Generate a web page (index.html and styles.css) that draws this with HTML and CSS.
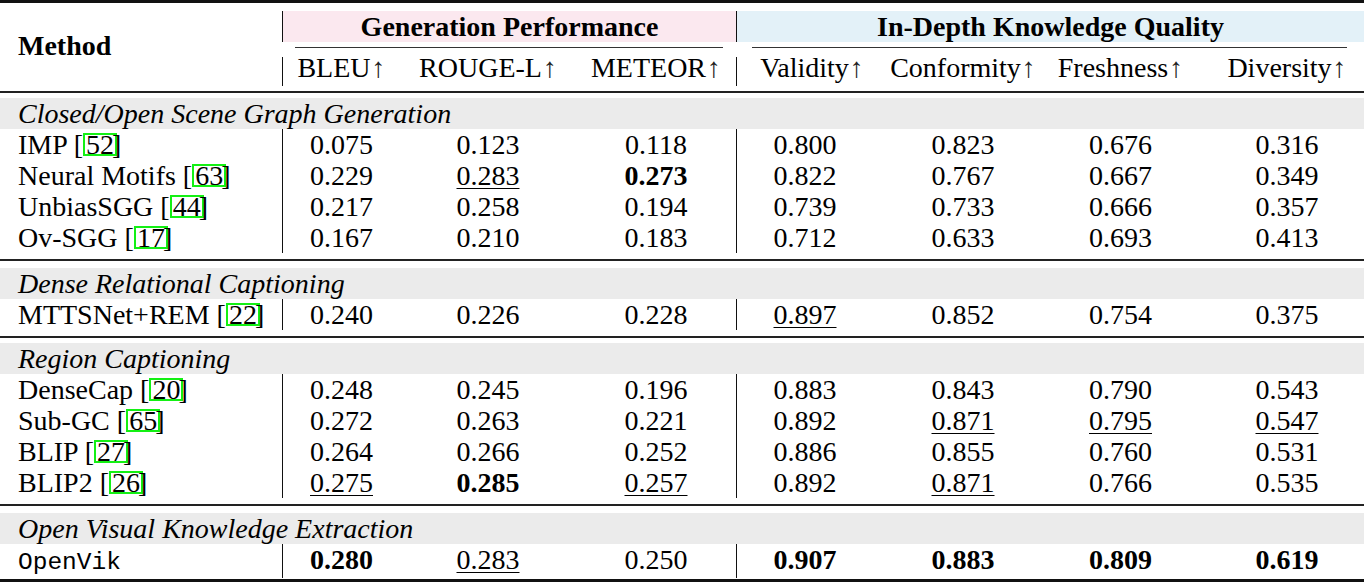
FILE: index.html
```html
<!DOCTYPE html>
<html>
<head>
<meta charset="utf-8">
<link rel="stylesheet" href="styles.css">
</head>
<body>
<div class="tbl">
  <div class="toprule"></div>
  <div class="head">
    <div class="method">Method</div>
    <div class="grp grp-gen">Generation Performance</div>
    <div class="grp grp-kq">In-Depth Knowledge Quality</div>
    <div class="cmid cmid-gen"></div>
    <div class="cmid cmid-kq"></div>
    <div class="sub c1 vl">BLEU<span class="arr">↑</span></div>
    <div class="sub c2">ROUGE-L<span class="arr">↑</span></div>
    <div class="sub c3">METEOR<span class="arr">↑</span></div>
    <div class="sub c4 vl val-h">Validity<span class="arr">↑</span></div>
    <div class="sub c5">Conformity<span class="arr">↑</span></div>
    <div class="sub c6">Freshness<span class="arr">↑</span></div>
    <div class="sub c7 div-c">Diversity<span class="arr">↑</span></div>
  </div>
  <div class="midrule mt5"></div>

  <div class="sec mt5">Closed/Open Scene Graph Generation</div>
  <div class="row">
    <div class="m">IMP [<span class="cite">52</span>]</div>
    <div class="n vl">0.075</div><div class="n">0.123</div><div class="n">0.118</div>
    <div class="n vl val">0.800</div><div class="n">0.823</div><div class="n">0.676</div><div class="n div-c">0.316</div>
  </div>
  <div class="row">
    <div class="m">Neural Motifs [<span class="cite">63</span>]</div>
    <div class="n vl">0.229</div><div class="n"><u>0.283</u></div><div class="n"><b>0.273</b></div>
    <div class="n vl val">0.822</div><div class="n">0.767</div><div class="n">0.667</div><div class="n div-c">0.349</div>
  </div>
  <div class="row">
    <div class="m">UnbiasSGG [<span class="cite">44</span>]</div>
    <div class="n vl">0.217</div><div class="n">0.258</div><div class="n">0.194</div>
    <div class="n vl val">0.739</div><div class="n">0.733</div><div class="n">0.666</div><div class="n div-c">0.357</div>
  </div>
  <div class="row">
    <div class="m">Ov-SGG [<span class="cite">17</span>]</div>
    <div class="n vl">0.167</div><div class="n">0.210</div><div class="n">0.183</div>
    <div class="n vl val">0.712</div><div class="n">0.633</div><div class="n">0.693</div><div class="n div-c">0.413</div>
  </div>
  <div class="midrule mt6"></div>

  <div class="sec mt7">Dense Relational Captioning</div>
  <div class="row">
    <div class="m">MTTSNet+REM [<span class="cite">22</span>]</div>
    <div class="n vl">0.240</div><div class="n">0.226</div><div class="n">0.228</div>
    <div class="n vl val"><u>0.897</u></div><div class="n">0.852</div><div class="n">0.754</div><div class="n div-c">0.375</div>
  </div>
  <div class="midrule mt6"></div>

  <div class="sec mt5">Region Captioning</div>
  <div class="row">
    <div class="m">DenseCap [<span class="cite">20</span>]</div>
    <div class="n vl">0.248</div><div class="n">0.245</div><div class="n">0.196</div>
    <div class="n vl val">0.883</div><div class="n">0.843</div><div class="n">0.790</div><div class="n div-c">0.543</div>
  </div>
  <div class="row">
    <div class="m">Sub-GC [<span class="cite">65</span>]</div>
    <div class="n vl">0.272</div><div class="n">0.263</div><div class="n">0.221</div>
    <div class="n vl val">0.892</div><div class="n"><u>0.871</u></div><div class="n"><u>0.795</u></div><div class="n div-c"><u>0.547</u></div>
  </div>
  <div class="row">
    <div class="m">BLIP [<span class="cite">27</span>]</div>
    <div class="n vl">0.264</div><div class="n">0.266</div><div class="n">0.252</div>
    <div class="n vl val">0.886</div><div class="n">0.855</div><div class="n">0.760</div><div class="n div-c">0.531</div>
  </div>
  <div class="row">
    <div class="m">BLIP2 [<span class="cite">26</span>]</div>
    <div class="n vl"><u>0.275</u></div><div class="n"><b>0.285</b></div><div class="n"><u>0.257</u></div>
    <div class="n vl val">0.892</div><div class="n"><u>0.871</u></div><div class="n">0.766</div><div class="n div-c">0.535</div>
  </div>
  <div class="midrule mt6"></div>

  <div class="sec mt7">Open Visual Knowledge Extraction</div>
  <div class="row">
    <div class="m"><span class="tt">OpenVik</span></div>
    <div class="n vl"><b>0.280</b></div><div class="n"><u>0.283</u></div><div class="n">0.250</div>
    <div class="n vl val"><b>0.907</b></div><div class="n"><b>0.883</b></div><div class="n"><b>0.809</b></div><div class="n div-c"><b>0.619</b></div>
  </div>
  <div class="bottomrule"></div>
</div>
</body>
</html>
```

FILE: styles.css
```css
html, body {
  margin: 0;
  padding: 0;
  background: #ffffff;
}
body {
  font-family: "Liberation Serif", "Times New Roman", "DejaVu Serif", serif;
  font-size: 28px;
  color: #000;
}
.tbl {
  width: 1364px;
  display: flex;
  flex-direction: column;
}
.toprule {
  height: 3px;
  background: #111;
}
.bottomrule {
  height: 3px;
  background: #111;
  margin-top: 4px;
}
.midrule {
  height: 2px;
  background: #222;
}
.mt5 { margin-top: 5px; }
.mt6 { margin-top: 6px; }
.mt7 { margin-top: 7px; }

.head, .row {
  display: grid;
  grid-template-columns: 282px 118px 176px 160px 144px 166px 149px 169px;
}
.head {
  margin-top: 8px;
  grid-template-rows: 31px 15px 29px;
}
.method {
  grid-row: 1 / 4;
  grid-column: 1;
  font-weight: bold;
  display: flex;
  align-items: center;
  padding-left: 18px;
  padding-bottom: 6px;
  line-height: 31px;
}
.grp {
  grid-row: 1;
  font-weight: bold;
  text-align: center;
  line-height: 31px;
  border-left: 1px solid #111;
}
.grp-gen {
  grid-column: 2 / 5;
  background: #fbe8ef;
}
.grp-kq {
  grid-column: 5 / 9;
  background: #e3f1f8;
}
.cmid {
  grid-row: 2;
  margin-top: 5px;
  border-top: 1px solid #333;
  height: 0;
}
.cmid-gen {
  grid-column: 2 / 5;
  margin-left: 13px;
  margin-right: 13px;
}
.cmid-kq {
  grid-column: 5 / 9;
  margin-left: 16px;
  margin-right: 17px;
}
.sub {
  grid-row: 3;
  text-align: center;
  line-height: 21px;
  white-space: nowrap;
}
.arr {
  margin-left: 1px;
  color: #222;
}
.c1 { grid-column: 2; }
.c2 { grid-column: 3; }
.c3 { grid-column: 4; }
.c4 { grid-column: 5; }
.c5 { grid-column: 6; }
.c6 { grid-column: 7; }
.c7 { grid-column: 8; }

.vl {
  border-left: 1px solid #111;
}
.val-h { padding-left: 7px; }
.val { padding-right: 7px; }
.div-c { padding-left: 15px; }

.sec {
  background: #ebebeb;
  height: 31px;
  line-height: 31px;
  font-style: italic;
  padding-left: 18px;
  white-space: nowrap;
}
.row {
  height: 31px;
  line-height: 31px;
}
.m {
  padding-left: 18px;
  white-space: nowrap;
}
.n {
  text-align: center;
}
.n u {
  text-decoration-thickness: 1px;
  text-underline-offset: 3px;
}
.cite {
  display: inline-block;
  border: 2px solid #14f014;
  line-height: 19px;
  padding: 0 1px;
  margin-right: -5px;
}
.tt {
  font-family: "Liberation Mono", "DejaVu Sans Mono", monospace;
  font-size: 24.5px;
}
```
